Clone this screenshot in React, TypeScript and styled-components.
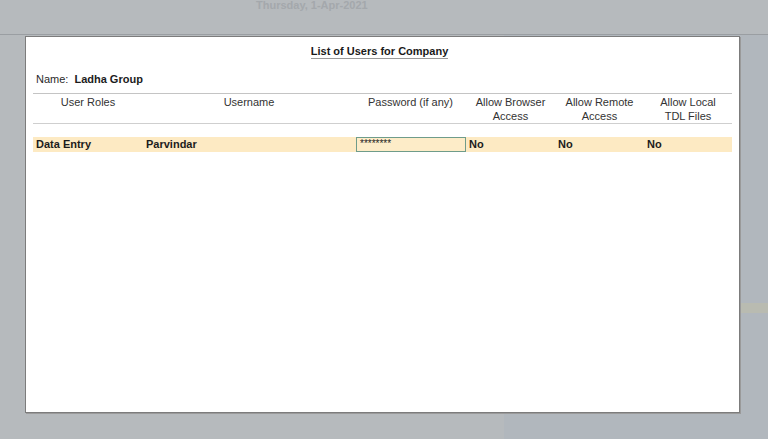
import React from 'react';
import styled, { createGlobalStyle } from 'styled-components';

const GlobalStyle = createGlobalStyle`
  html, body {
    margin: 0;
    padding: 0;
    background: #b6babd;
    font-family: "Liberation Sans", Arial, sans-serif;
  }
`;

const Screen = styled.div`
  position: relative;
  width: 768px;
  height: 439px;
  overflow: hidden;
  display: flex;
  flex-direction: column;
  background: #b6babd;
`;

const TopBar = styled.div`
  height: 34px;
  border-bottom: 1px solid #9a9ea2;
  box-shadow: 0 1px 0 #c4c8cb;
  display: flex;
  padding-left: 256px;
`;

const DateText = styled.div`
  margin-top: -1px;
  font-size: 11px;
  line-height: 12px;
  font-weight: bold;
  color: #a4a8ac;
`;

const Body = styled.div`
  flex: 1;
  display: flex;
`;

const LeftPane = styled.div`
  width: 504px;
  background: #b6babd;
`;

const RightPane = styled.div`
  flex: 1;
  background: #b1b7bd;
  display: flex;
  flex-direction: column;
  padding-top: 268px;
`;

const Band = styled.div`
  height: 10px;
  background: #b9bbb1;
`;

const Dialog = styled.div`
  position: absolute;
  left: 25px;
  top: 36px;
  width: 715px;
  height: 377px;
  box-sizing: border-box;
  background: #ffffff;
  border: 1px solid #7c7c7c;
  box-shadow: 1px 1px 0 #9a9a9a;
  padding: 7px 7px 0 7px;
  display: flex;
  flex-direction: column;
  color: #1c1c1c;
  font-size: 11px;
`;

const TitleRow = styled.div`
  display: flex;
  justify-content: center;
  padding-right: 6px;
`;

const Title = styled.span`
  font-weight: bold;
  line-height: 14px;
  border-bottom: 1px solid #9a9a9a;
  color: #1a1a1a;
`;

const NameRow = styled.div`
  margin-top: 13px;
  line-height: 14px;
  padding-left: 3px;
  display: flex;
  gap: 6px;
`;

const NameLabel = styled.span`
  color: #2a2a2a;
`;

const NameValue = styled.span`
  font-weight: bold;
`;

const columns = '110px 212px 111px 89px 89px 88px';

const HeaderGrid = styled.div`
  margin-top: 7px;
  display: grid;
  grid-template-columns: ${columns};
  border-top: 1px solid #c4c4c4;
  border-bottom: 1px solid #cfcfcf;
  padding-top: 1px;
  height: 28px;
`;

const HeadCell = styled.div`
  text-align: center;
  line-height: 14px;
  color: #333333;
`;

const DataRow = styled.div`
  margin-top: 13px;
  display: grid;
  grid-template-columns: ${columns};
  background: #fdeac3;
  height: 15px;
  align-items: center;
`;

const Cell = styled.div`
  font-weight: bold;
  padding-left: 3px;
  line-height: 15px;
`;

const PasswordBox = styled.div`
  margin-left: 1px;
  height: 15px;
  border: 1px solid #6f9c8a;
  box-sizing: border-box;
  background: #fdecc8;
  font-size: 10px;
  line-height: 11px;
  padding-left: 3px;
`;

const headers = [
  ['User Roles'],
  ['Username'],
  ['Password (if any)'],
  ['Allow Browser', 'Access'],
  ['Allow Remote', 'Access'],
  ['Allow Local', 'TDL Files'],
];

export default function App() {
  return (
    <>
      <GlobalStyle />
      <Screen>
        <TopBar>
          <DateText>Thursday, 1-Apr-2021</DateText>
        </TopBar>
        <Body>
          <LeftPane />
          <RightPane>
            <Band />
          </RightPane>
        </Body>
        <Dialog>
          <TitleRow>
            <Title>List of Users for Company</Title>
          </TitleRow>
          <NameRow>
            <NameLabel>Name:</NameLabel>
            <NameValue>Ladha Group</NameValue>
          </NameRow>
          <HeaderGrid>
            {headers.map((lines, i) => (
              <HeadCell key={i}>
                {lines.map((l, j) => (
                  <div key={j}>{l}</div>
                ))}
              </HeadCell>
            ))}
          </HeaderGrid>
          <DataRow>
            <Cell>Data Entry</Cell>
            <Cell>Parvindar</Cell>
            <PasswordBox>********</PasswordBox>
            <Cell>No</Cell>
            <Cell>No</Cell>
            <Cell>No</Cell>
          </DataRow>
        </Dialog>
      </Screen>
    </>
  );
}
